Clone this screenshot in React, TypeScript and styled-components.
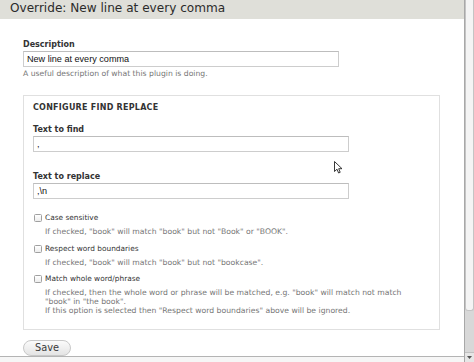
import React from "react";
import styled, { createGlobalStyle } from "styled-components";

const GlobalStyle = createGlobalStyle`
  html, body {
    margin: 0;
    padding: 0;
    background: #ffffff;
  }
  body {
    font-family: "DejaVu Sans", Verdana, sans-serif;
    color: #333;
  }
`;

const Frame = styled.div`
  position: relative;
  width: 474px;
  height: 362px;
  display: flex;
  overflow: hidden;
  background: #fff;
`;

const Main = styled.div`
  flex: 1;
  display: flex;
  flex-direction: column;
  min-width: 0;
`;

const TitleBar = styled.div`
  box-sizing: border-box;
  height: 19px;
  flex-shrink: 0;
  background: #dfdfd9;
  padding: 1px 0 0 10px;
  font-size: 12.1px;
  line-height: 14px;
  color: #2b2b2b;
  white-space: nowrap;
  overflow: hidden;
`;

const Content = styled.div`
  flex: 1;
  padding: 21px 0 0 23px;
  display: flex;
  flex-direction: column;
  align-items: flex-start;
  overflow: hidden;
`;

const Label = styled.label<{ $top?: number }>`
  display: block;
  font-weight: bold;
  font-size: 8px;
  line-height: 10px;
  color: #333;
  margin-top: ${(p) => p.$top ?? 0}px;
  margin-bottom: 1px;
`;

const TextInput = styled.div`
  box-sizing: border-box;
  width: 316px;
  height: 16px;
  border: 1px solid #cdcdcd;
  border-top-color: #bdbdbd;
  padding: 0 3px;
  font-family: "Liberation Sans", Arial, sans-serif;
  font-size: 9.1px;
  line-height: 14px;
  color: #111;
  background: #fff;
`;

const Help = styled.div<{ $top?: number; $indent?: boolean }>`
  font-size: 7.68px;
  line-height: 9.3px;
  color: #767676;
  margin-top: ${(p) => p.$top ?? 0}px;
  padding-left: ${(p) => (p.$indent ? 12 : 0)}px;
`;

const Fieldset = styled.div`
  box-sizing: border-box;
  width: 417px;
  margin-top: 17px;
  border: 1px solid #e0e0e0;
  padding: 7px 9px 13px 9px;
  display: flex;
  flex-direction: column;
  align-items: flex-start;
`;

const Legend = styled.div`
  font-weight: bold;
  font-size: 8px;
  letter-spacing: 0.25px;
  line-height: 10px;
  color: #333;
  text-transform: uppercase;
  margin-bottom: 12px;
`;

const CheckRow = styled.div<{ $top: number }>`
  display: flex;
  align-items: center;
  gap: 3px;
  margin-top: ${(p) => p.$top}px;
  font-size: 7.4px;
  line-height: 10px;
  color: #333;
`;

const Box = styled.span`
  box-sizing: border-box;
  width: 8px;
  height: 8px;
  margin-left: 1px;
  border: 1px solid #a0a0a0;
  border-radius: 1.5px;
  background: linear-gradient(#ffffff, #ededed);
`;

const SaveButton = styled.button`
  box-sizing: border-box;
  margin-top: 10px;
  width: 48px;
  height: 18px;
  border: 1px solid #c8c8c8;
  border-radius: 9px;
  background: linear-gradient(#fbfbfb, #e4e4e4);
  font-family: "DejaVu Sans", Verdana, sans-serif;
  font-size: 9.8px;
  color: #3a3a3a;
  padding: 0;
`;

const BottomBar = styled.div`
  height: 5px;
  flex-shrink: 0;
  border-top: 1px solid #b4b4b4;
  background: #f6f6f6;
`;

const Scrollbar = styled.div`
  width: 9px;
  flex-shrink: 0;
  display: flex;
  flex-direction: column;
  border-left: 1px solid #a8a8a8;
  background: #d8d8d8;
`;

const Thumb = styled.div`
  height: 311px;
  box-sizing: border-box;
  border: 1px solid #c4c4c4;
  border-top: none;
  border-radius: 0 0 3px 3px;
  background: #f4f4f4;
`;

const Track = styled.div`
  flex: 1;
`;

const ArrowButton = styled.div`
  height: 9px;
  display: flex;
  align-items: center;
  justify-content: center;
  background: #e6e6e6;
  border-top: 1px solid #c0c0c0;
`;

const Cursor = styled.svg`
  position: absolute;
  left: 334px;
  top: 161px;
`;

const checks = [
  {
    label: "Case sensitive",
    top: 14,
    help: ['If checked, "book" will match "book" but not "Book" or "BOOK".'],
  },
  {
    label: "Respect word boundaries",
    top: 7,
    help: ['If checked, "book" will match "book" but not "bookcase".'],
  },
  {
    label: "Match whole word/phrase",
    top: 7,
    help: [
      'If checked, then the whole word or phrase will be matched, e.g. "book" will match not match',
      '"book" in "the book".',
      'If this option is selected then "Respect word boundaries" above will be ignored.',
    ],
  },
];

export default function App() {
  return (
    <>
      <GlobalStyle />
      <Frame>
        <Main>
          <TitleBar>Override: New line at every comma</TitleBar>
          <Content>
            <Label>Description</Label>
            <TextInput>New line at every comma</TextInput>
            <Help $top={2}>A useful description of what this plugin is doing.</Help>

            <Fieldset>
              <Legend>Configure find replace</Legend>
              <Label>Text to find</Label>
              <TextInput>,</TextInput>
              <Label $top={20}>Text to replace</Label>
              <TextInput>,\n</TextInput>

              {checks.map((c) => (
                <React.Fragment key={c.label}>
                  <CheckRow $top={c.top}>
                    <Box />
                    {c.label}
                  </CheckRow>
                  <Help $top={4} $indent>
                    {c.help.map((line) => (
                      <div key={line}>{line}</div>
                    ))}
                  </Help>
                </React.Fragment>
              ))}
            </Fieldset>

            <SaveButton>Save</SaveButton>
          </Content>
          <BottomBar />
        </Main>
        <Scrollbar>
          <Thumb />
          <Track />
          <ArrowButton>
            <svg width="5" height="3" viewBox="0 0 5 3">
              <path d="M0 0 L5 0 L2.5 3 Z" fill="#555" />
            </svg>
          </ArrowButton>
        </Scrollbar>
        <Cursor width="9" height="13" viewBox="0 0 9 13">
          <path
            d="M0.5 0.5 L0.5 10.5 L3 8.2 L4.6 12 L6.2 11.3 L4.7 7.7 L8 7.7 Z"
            fill="#fff"
            stroke="#222"
            strokeWidth="0.9"
            strokeLinejoin="round"
          />
        </Cursor>
      </Frame>
    </>
  );
}
